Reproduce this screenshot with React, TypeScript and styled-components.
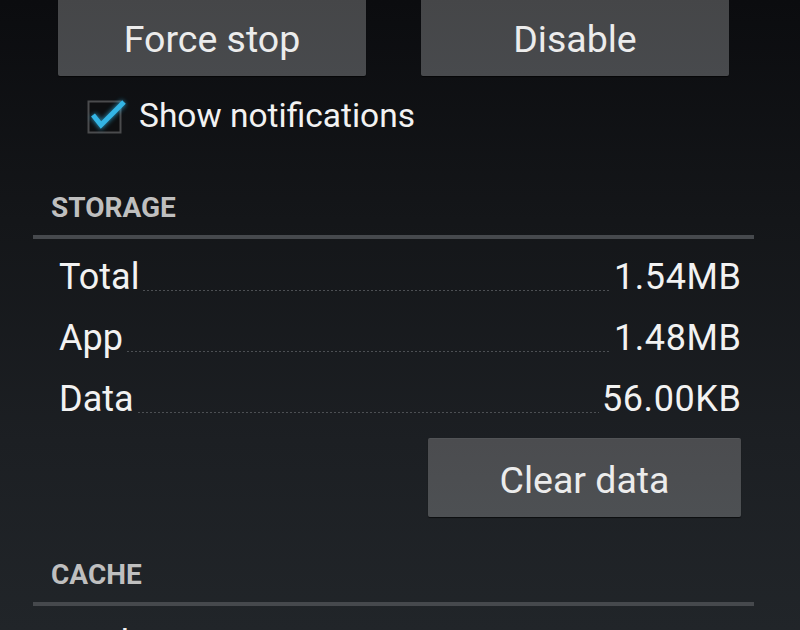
import React from "react";
import styled, { createGlobalStyle } from "styled-components";

const Global = createGlobalStyle`
  html, body { margin: 0; padding: 0; background: #0b0c0f; }
  body { font-family: Roboto, "Noto Sans", sans-serif; overflow: hidden; }
`;

const Screen = styled.div`
  width: 800px;
  height: 630px;
  overflow: hidden;
  background: linear-gradient(to bottom, #0b0c0f 0%, #141619 35%, #1c1f23 70%, #212529 100%);
  color: #f2f2f2;
`;

const ButtonRow = styled.div`
  display: flex;
  gap: 55px;
  padding-left: 58px;
  margin-top: -3px;
`;

const Button = styled.button<{ $width: number; $light?: boolean }>`
  box-sizing: border-box;
  width: ${(p) => p.$width}px;
  height: 79px;
  padding: 5px 0 0;
  border: none;
  border-top: 1px solid #515356;
  border-radius: 2px;
  background: ${(p) =>
    p.$light
      ? "linear-gradient(to bottom, #4b4c4f, #4d5053)"
      : "linear-gradient(to bottom, #454648, #484a4d)"};
  box-shadow: 0 1px 1px rgba(0, 0, 0, 0.6);
  color: #ececec;
  font-family: Roboto, sans-serif;
  font-size: 37.5px;
  line-height: 73px;
`;

const CheckRow = styled.label`
  display: flex;
  align-items: center;
  gap: 11px;
  margin-top: 18px;
  height: 44px;
  padding-left: 86px;
  font-size: 33.5px;
  line-height: 44px;
  color: #f2f2f2;
`;

const Section = styled.div`
  margin-left: 33px;
  width: 721px;
`;

const Header = styled.div<{ $top: number }>`
  margin-top: ${(p) => p.$top}px;
  padding: 0 0 10px 18px;
  font-size: 28px;
  font-weight: 700;
  line-height: 34px;
  color: #bfbfbf;
`;

const Divider = styled.div`
  height: 4px;
  background: #46494d;
`;

const Rows = styled.div`
  margin-top: 8px;
  padding: 0 13px 0 26px;
`;

const Row = styled.div`
  display: flex;
  height: 61px;
  font-size: 36px;
  line-height: 61px;
  color: #f2f2f2;
`;

const Value = styled.span`
  letter-spacing: 0.6px;
  margin-right: -0.6px;
`;

const Leader = styled.div`
  flex: 1;
  align-self: flex-end;
  height: 1px;
  margin: 0 3px 17px 4px;
  background-image: repeating-linear-gradient(
    to right,
    #4c4f53 0,
    #4c4f53 2px,
    transparent 2px,
    transparent 4px
  );
`;

const ActionRow = styled.div`
  display: flex;
  justify-content: flex-end;
  margin-top: 8px;
  padding-right: 13px;
`;

const CheckIcon = () => (
  <svg width="42" height="42" viewBox="0 0 42 42" style={{ overflow: "visible" }}>
    <defs>
      <filter id="glow" x="-50%" y="-50%" width="200%" height="200%">
        <feGaussianBlur stdDeviation="2.2" />
      </filter>
    </defs>
    <rect x="2.5" y="6.5" width="32" height="31" fill="#0e0f11" stroke="#4a4b4d" strokeWidth="2" />
    <path d="M7 20 L15 30 L38 7" fill="none" stroke="#33b5e5" strokeWidth="7" opacity="0.6" filter="url(#glow)" />
    <path d="M7 20 L15 30 L38 7" fill="none" stroke="#33b5e5" strokeWidth="5" strokeLinejoin="miter" />
  </svg>
);

const storage = [
  { label: "Total", value: "1.54MB" },
  { label: "App", value: "1.48MB" },
  { label: "Data", value: "56.00KB" },
];

export default function App() {
  return (
    <Screen>
      <Global />
      <ButtonRow>
        <Button $width={308}>Force stop</Button>
        <Button $width={308}>Disable</Button>
      </ButtonRow>
      <CheckRow>
        <CheckIcon />
        <span>Show notifications</span>
      </CheckRow>
      <Section>
        <Header $top={53}>STORAGE</Header>
        <Divider />
        <Rows>
          {storage.map((r) => (
            <Row key={r.label}>
              <span>{r.label}</span>
              <Leader />
              <Value>{r.value}</Value>
            </Row>
          ))}
        </Rows>
        <ActionRow>
          <Button $width={313} $light>
            Clear data
          </Button>
        </ActionRow>
        <Header $top={41}>CACHE</Header>
        <Divider />
        <Rows>
          <Row>
            <span>Cache</span>
            <Leader />
            <Value>0.00B</Value>
          </Row>
        </Rows>
      </Section>
    </Screen>
  );
}
